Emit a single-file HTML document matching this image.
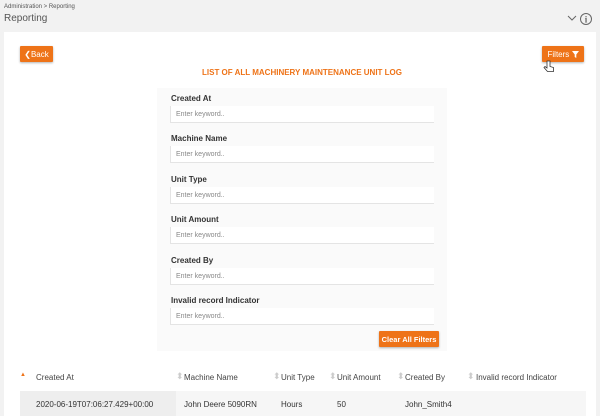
<!DOCTYPE html>
<html><head><meta charset="utf-8"><style>
*{margin:0;padding:0;box-sizing:border-box}
body{width:600px;height:416px;overflow:hidden;background:#f2f2f2;font-family:"Liberation Sans",sans-serif;position:relative;color:#333}
.abs{position:absolute}
.card{left:4px;top:32px;width:592px;height:384px;background:#fff}
.btn{background:#ee7318;color:#fff;font-size:8px;border-radius:1px;box-shadow:0 1px 2px rgba(0,0,0,.3);display:flex;align-items:center;justify-content:center}
.panel{left:157px;top:88px;width:290px;height:263px;background:#fafafa}
.lbl{font-size:8px;font-weight:bold;color:#333;left:14px}
.inp{left:13px;width:264px;height:17px;background:#fff;border-left:1px solid #e4e4e4;border-bottom:1px solid #e4e4e4;font-size:7px;color:#888;padding:5px 0 0 5px}
.th{top:373px;font-size:8px;color:#444}
.td{top:400px;font-size:8px;color:#333}
.s{color:#ccc;font-size:9px;top:371px}
</style></head><body>
<div class="abs" style="left:4px;top:4px;font-size:6px;color:#555">Administration &gt; Reporting</div>
<div class="abs" style="left:4px;top:13px;font-size:10px;color:#555">Reporting</div>
<svg class="abs" style="left:567px;top:12px" width="28" height="14"><path d="M1 4l4 4 4-4" stroke="#666" fill="none" stroke-width="1"/><circle cx="19" cy="7" r="5.5" stroke="#666" fill="none" stroke-width="1"/><text x="19" y="10.5" font-size="9" font-family="Liberation Serif" font-weight="bold" text-anchor="middle" fill="#666">i</text></svg>
<div class="abs card"></div>
<div class="abs btn" style="left:20px;top:46px;width:33px;height:16px">❮Back</div>
<div class="abs btn" style="left:542px;top:46px;width:42px;height:16px">Filters&nbsp;<svg width="7" height="7"><path d="M0 0h7L4.3 3.5V7L2.7 6V3.5z" fill="#fff"/></svg></div>
<svg class="abs" style="left:543px;top:59px" width="12" height="16"><path d="M4 2v7l-2-1.5-1 1 3.5 4h6V8.5L7 7.5V2z" fill="#fff" stroke="#333" stroke-width=".8"/></svg>
<div class="abs" style="left:0;width:604px;top:68px;text-align:center;font-size:8px;font-weight:bold;color:#ee7318">LIST OF ALL MACHINERY MAINTENANCE UNIT LOG</div>
<div class="abs panel">
<div class="abs lbl" style="top:6px">Created At</div><div class="abs inp" style="top:18px">Enter keyword..</div>
<div class="abs lbl" style="top:46px">Machine Name</div><div class="abs inp" style="top:58px">Enter keyword..</div>
<div class="abs lbl" style="top:87px">Unit Type</div><div class="abs inp" style="top:99px">Enter keyword..</div>
<div class="abs lbl" style="top:127px">Unit Amount</div><div class="abs inp" style="top:139px">Enter keyword..</div>
<div class="abs lbl" style="top:168px">Created By</div><div class="abs inp" style="top:180px">Enter keyword..</div>
<div class="abs lbl" style="top:208px">Invalid record Indicator</div><div class="abs inp" style="top:220px">Enter keyword..</div>
<div class="abs btn" style="left:222px;top:243px;width:60px;height:16px;font-weight:bold;font-size:7.5px">Clear All Filters</div>
</div>
<div class="abs th" style="left:20px;color:#ee7318;font-size:6px;top:372px">▲</div>
<div class="abs th" style="left:36px">Created At</div>
<div class="abs th s" style="left:176px">⬍</div><div class="abs th" style="left:184px">Machine Name</div>
<div class="abs th s" style="left:273px">⬍</div><div class="abs th" style="left:281px">Unit Type</div>
<div class="abs th s" style="left:329px">⬍</div><div class="abs th" style="left:337px">Unit Amount</div>
<div class="abs th s" style="left:397px">⬍</div><div class="abs th" style="left:405px">Created By</div>
<div class="abs th s" style="left:467px">⬍</div><div class="abs th" style="left:476px">Invalid record Indicator</div>
<div class="abs" style="left:20px;top:391px;width:156px;height:25px;background:#eee"></div>
<div class="abs" style="left:176px;top:391px;width:410px;height:25px;background:#f6f6f6"></div>
<div class="abs td" style="left:36px">2020-06-19T07:06:27.429+00:00</div>
<div class="abs td" style="left:184px">John Deere 5090RN</div>
<div class="abs td" style="left:281px">Hours</div>
<div class="abs td" style="left:337px">50</div>
<div class="abs td" style="left:405px">John_Smith4</div>
</body></html>
